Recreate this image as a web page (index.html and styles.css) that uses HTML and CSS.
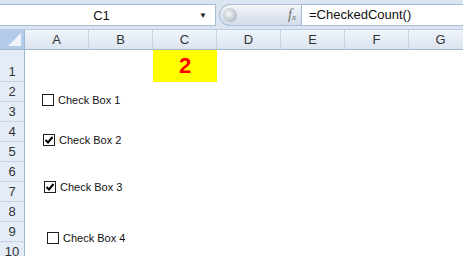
FILE: index.html
```html
<!DOCTYPE html>
<html>
  <head>
    <meta charset="utf-8">
    <title>CheckedCount</title>
    <link rel="stylesheet" href="styles.css">
  </head>
  <body>
    <div class="formula-bar">
      <div class="name-box">
        <span class="name">C1</span>
        <span class="drop">&#9660;</span>
      </div>
      <div class="pill">
        <span class="knob"></span>
        <span class="fx">f<sub>x</sub></span>
      </div>
      <div class="formula">=CheckedCount()</div>
    </div>
    <div class="sheet">
      <div class="grid">
        <div class="corner"><span class="tri"></span></div>
        <div class="col-head">A</div>
        <div class="col-head">B</div>
        <div class="col-head">C</div>
        <div class="col-head">D</div>
        <div class="col-head">E</div>
        <div class="col-head">F</div>
        <div class="col-head">G</div>

        <div class="row-head">1</div>
        <div class="cell"></div><div class="cell"></div>
        <div class="cell result">2</div>
        <div class="cell"></div><div class="cell"></div><div class="cell"></div><div class="cell"></div>

        <div class="row-head">2</div><div class="cell span"></div>
        <div class="row-head">3</div><div class="cell span"></div>
        <div class="row-head">4</div><div class="cell span"></div>
        <div class="row-head">5</div><div class="cell span"></div>
        <div class="row-head">6</div><div class="cell span"></div>
        <div class="row-head">7</div><div class="cell span"></div>
        <div class="row-head">8</div><div class="cell span"></div>
        <div class="row-head">9</div><div class="cell span"></div>
        <div class="row-head">10</div><div class="cell span"></div>
      </div>

      <label class="checkbox cb1"><span class="box"></span>Check Box 1</label>
      <label class="checkbox cb2"><span class="box"><svg viewBox="0 0 10 10" width="10" height="10"><path d="M1.5 5 L4 7.5 L8.5 2" fill="none" stroke="#000" stroke-width="2"/></svg></span>Check Box 2</label>
      <label class="checkbox cb3"><span class="box"><svg viewBox="0 0 10 10" width="10" height="10"><path d="M1.5 5 L4 7.5 L8.5 2" fill="none" stroke="#000" stroke-width="2"/></svg></span>Check Box 3</label>
      <label class="checkbox cb4"><span class="box"></span>Check Box 4</label>
    </div>
  </body>
</html>
```
FILE: styles.css
```css
body {
  margin: 0;
  width: 463px;
  height: 256px;
  overflow: hidden;
  background: #fff;
  font-family: "Liberation Sans", Arial, sans-serif;
}

.formula-bar {
  display: flex;
  height: 22px;
  padding: 4px 0 3px 0;
  background: #dbe5f2;
  border-top: 1px solid #c3d4ea;
  border-bottom: 1px solid #b9cbe2;
  box-sizing: content-box;
  margin-top: -1px;
}

.name-box {
  width: 216px;
  height: 22px;
  box-sizing: border-box;
  background: #fff;
  border: 1px solid #a9bcd5;
  border-left: none;
  display: flex;
  align-items: center;
  position: relative;
}

.name {
  flex: 1;
  text-align: center;
  font-size: 13px;
  color: #111;
  padding-left: 4px;
}

.drop {
  font-size: 8px;
  color: #222;
  width: 14px;
  margin-right: 2px;
}

.pill {
  width: 82px;
  margin-left: 3px;
  height: 22px;
  box-sizing: border-box;
  border: 1px solid #aebfd6;
  border-right: none;
  border-radius: 11px 0 0 11px;
  background: linear-gradient(#f4f7fb, #dfe6ef 55%, #d3dce8);
  display: flex;
  align-items: center;
  justify-content: space-between;
}

.knob {
  width: 14px;
  height: 14px;
  margin-left: 3px;
  border-radius: 50%;
  background: radial-gradient(circle at 40% 40%, #f6f7f9, #b8bfc9 70%, #9aa3b0);
}

.fx {
  font-family: "Liberation Serif", serif;
  font-style: italic;
  font-size: 14px;
  color: #6b6b6b;
  margin-right: 5px;
}

.fx sub {
  font-size: 9px;
  vertical-align: -1px;
}

.formula {
  flex: 1;
  height: 22px;
  box-sizing: border-box;
  background: #fff;
  border: 1px solid #a9bcd5;
  border-right: none;
  font-size: 13px;
  color: #111;
  padding-left: 7px;
  line-height: 20px;
}

.sheet {
  position: relative;
}

.grid {
  display: grid;
  grid-template-columns: 25px repeat(7, 64px);
  grid-template-rows: 20px 32px repeat(9, 20px);
}

.corner {
  background: #b3cbeb;
  border-right: 1px solid #9eb6ce;
  border-bottom: 1px solid #9eb6ce;
  position: relative;
}

.tri {
  position: absolute;
  right: 3px;
  bottom: 3px;
  width: 0;
  height: 0;
  border-left: 13px solid transparent;
  border-bottom: 13px solid #f1f5fb;
}

.col-head {
  background: linear-gradient(#f1f5fb, #e3eaf4 60%, #dbe4f0);
  border-right: 1px solid #c5d3e4;
  border-bottom: 1px solid #9eb6ce;
  font-size: 13px;
  color: #333;
  text-align: center;
  line-height: 19px;
}

.row-head {
  background: #e4ecf7;
  border-right: 1px solid #9eb6ce;
  border-bottom: 1px solid #c5d3e4;
  font-size: 13px;
  color: #333;
  display: flex;
  align-items: flex-end;
  justify-content: center;
  line-height: 18px;
}

.cell {
  background: #fff;
}

.cell.span {
  grid-column: 2 / 9;
}

.result {
  background: #ffff00;
  color: #ff0000;
  font-weight: bold;
  font-size: 22px;
  text-align: center;
  line-height: 32px;
}

.checkbox {
  position: absolute;
  display: flex;
  align-items: center;
  font-size: 11px;
  color: #111;
  white-space: nowrap;
}

.box {
  width: 12px;
  height: 12px;
  box-sizing: border-box;
  border: 1px solid #1e1e1e;
  background: #fff;
  margin-right: 4px;
  display: flex;
  align-items: center;
  justify-content: center;
}

.cb1 { left: 42px; top: 64px; }
.cb2 { left: 43px; top: 104px; }
.cb3 { left: 44px; top: 151px; }
.cb4 { left: 47px; top: 202px; }
```
